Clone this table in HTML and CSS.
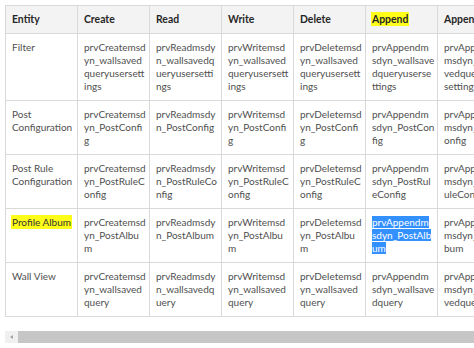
FILE: index.html
```html
<!DOCTYPE html>
<html>
<head>
<meta charset="utf-8">
<link rel="stylesheet" href="styles.css">
</head>
<body>
<div class="page">
  <div class="scroller">
    <table class="grid">
      <colgroup>
        <col class="c"><col class="c"><col class="c"><col class="c"><col class="c"><col class="c"><col class="c">
      </colgroup>
      <thead>
        <tr>
          <th>Entity</th><th>Create</th><th>Read</th><th>Write</th><th>Delete</th><th><span class="hl">Append</span></th><th>Append To</th>
        </tr>
      </thead>
      <tbody>
        <tr>
          <td class="name">Filter</td>
          <td>prvCreatemsd<br>yn_wallsaved<br>queryusersett<br>ings</td>
          <td>prvReadmsdy<br>n_wallsavedq<br>ueryusersetti<br>ngs</td>
          <td>prvWritemsd<br>yn_wallsaved<br>queryusersett<br>ings</td>
          <td>prvDeletemsd<br>yn_wallsaved<br>queryusersett<br>ings</td>
          <td>prvAppendm<br>sdyn_wallsave<br>dqueryuserse<br>ttings</td>
          <td>prvAppendTo<br>msdyn_wallsa<br>vedqueryuser<br>settings</td>
        </tr>
        <tr>
          <td class="name">Post Configuration</td>
          <td>prvCreatemsd<br>yn_PostConfi<br>g</td>
          <td>prvReadmsdy<br>n_PostConfig</td>
          <td>prvWritemsd<br>yn_PostConfi<br>g</td>
          <td>prvDeletemsd<br>yn_PostConfi<br>g</td>
          <td>prvAppendm<br>sdyn_PostCon<br>fig</td>
          <td>prvAppendTo<br>msdyn_PostC<br>onfig</td>
        </tr>
        <tr>
          <td class="name">Post Rule Configuration</td>
          <td>prvCreatemsd<br>yn_PostRuleC<br>onfig</td>
          <td>prvReadmsdy<br>n_PostRuleCo<br>nfig</td>
          <td>prvWritemsd<br>yn_PostRuleC<br>onfig</td>
          <td>prvDeletemsd<br>yn_PostRuleC<br>onfig</td>
          <td>prvAppendm<br>sdyn_PostRul<br>eConfig</td>
          <td>prvAppendTo<br>msdyn_PostR<br>uleConfig</td>
        </tr>
        <tr>
          <td class="name"><span class="hl hl-plain">Profile Album</span></td>
          <td>prvCreatemsd<br>yn_PostAlbu<br>m</td>
          <td>prvReadmsdy<br>n_PostAlbum</td>
          <td>prvWritemsd<br>yn_PostAlbu<br>m</td>
          <td>prvDeletemsd<br>yn_PostAlbu<br>m</td>
          <td><span class="sel">prvAppendm<br>sdyn_PostAlb<br>um</span></td>
          <td>prvAppendTo<br>msdyn_PostAl<br>bum</td>
        </tr>
        <tr>
          <td class="name">Wall View</td>
          <td>prvCreatemsd<br>yn_wallsaved<br>query</td>
          <td>prvReadmsdy<br>n_wallsavedq<br>uery</td>
          <td>prvWritemsd<br>yn_wallsaved<br>query</td>
          <td>prvDeletemsd<br>yn_wallsaved<br>query</td>
          <td>prvAppendm<br>sdyn_wallsave<br>dquery</td>
          <td>prvAppendTo<br>msdyn_wallsa<br>vedquery</td>
        </tr>
      </tbody>
    </table>
  </div>
  <div class="hscroll">
    <span class="arrow"></span>
    <span class="thumb"></span>
  </div>
</div>
</body>
</html>
```

FILE: styles.css
```css
html, body {
  margin: 0;
  padding: 0;
  background: #ffffff;
}

.page {
  padding: 5px 0 0 5px;
  font-family: Lato, "Open Sans", sans-serif;
  font-size: 10px;
  color: #4f4f4f;
}

.scroller {
  overflow: hidden;
}

.grid {
  border-collapse: collapse;
  table-layout: fixed;
  width: 505px;
}

.grid .c {
  width: 72px;
}

.grid th,
.grid td {
  border: 1px solid #d9d9d9;
  padding: 7px 6px;
  line-height: 13px;
  text-align: left;
  vertical-align: top;
  white-space: nowrap;
}

.grid td.name {
  white-space: normal;
}

.grid th {
  background: #f3f3f3;
  color: #262626;
  font-weight: 700;
  font-size: 10.4px;
}

.hl {
  background: #ffff1a;
  padding: 1px 1px;
  margin-left: -1px;
  white-space: nowrap;
}

.hl-plain {
  color: #333333;
}

.sel {
  background: #3390ff;
  color: #ffffff;
}

.hscroll {
  margin-top: 14px;
  height: 12px;
  display: flex;
  align-items: stretch;
  background: #f0f0f0;
}

.arrow {
  width: 13px;
  display: flex;
  align-items: center;
  justify-content: center;
}

.arrow::before {
  content: "";
  border-style: solid;
  border-width: 2.5px 3px 2.5px 0;
  border-color: transparent #a3a3a3 transparent transparent;
}

.thumb {
  flex: 1;
  background: #c6c6c6;
}
```
